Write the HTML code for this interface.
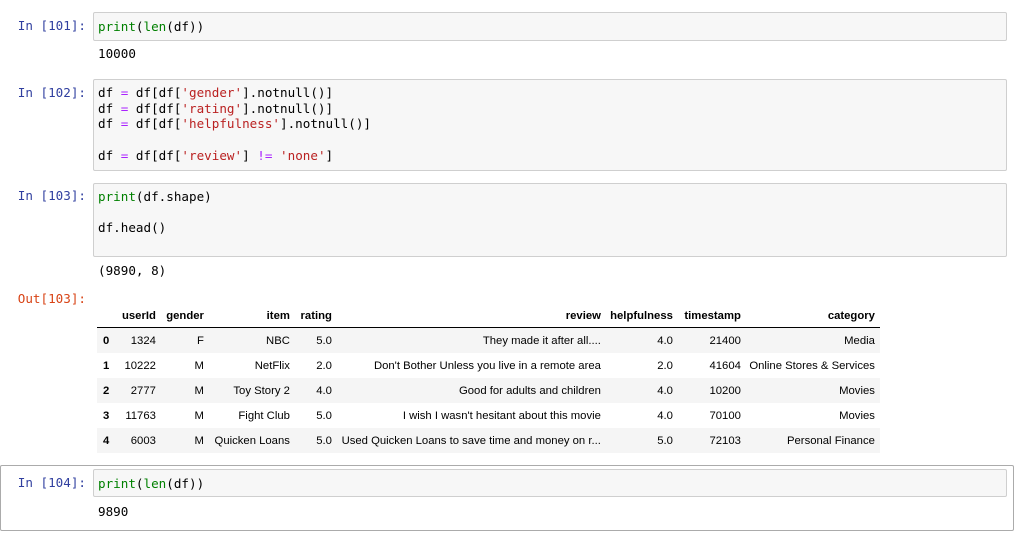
<!DOCTYPE html>
<html><head><meta charset="utf-8"><style>
body{margin:0;width:1024px;height:540px;background:#fff;position:relative;overflow:hidden;font-family:"DejaVu Sans Mono","Liberation Mono",monospace;font-size:12.6px;color:#000}
.p{position:absolute;right:calc(1024px - 86px);color:#303f9f;white-space:pre;line-height:16px}
.o{color:#d84315}
.box{position:absolute;left:93px;width:912px;background:#f7f7f7;border:1px solid #cfcfcf;border-radius:2px}
.code{position:absolute;left:98px;white-space:pre;line-height:15.7px}
.g{color:#008000}.s{color:#ba2121}.op{color:#aa22ff}
table{position:absolute;left:97px;top:304px;border-collapse:collapse;font-family:"Liberation Sans",Arial,sans-serif;font-size:11.3px}
th,td{text-align:right;padding:0 0 0 0;height:25px;white-space:nowrap}
thead th{height:23px;border-bottom:1px solid #000;font-weight:bold;vertical-align:middle}
tbody tr:nth-child(odd){background:#f5f5f5}
tbody th{text-align:left;padding-left:6px}
.sel{position:absolute;left:0;top:465px;width:1012px;height:64px;border:1px solid #ababab;border-radius:2px}
</style></head><body>
<div class="p" style="top:18px">In [101]:</div>
<div class="box" style="top:12px;height:27px"></div>
<div class="code" style="top:19px"><span class="g">print</span>(<span class="g">len</span>(df))</div>
<div class="code" style="top:46px">10000</div>

<div class="p" style="top:85px">In [102]:</div>
<div class="box" style="top:79px;height:90px"></div>
<div class="code" style="top:85px">df <span class="op">=</span> df[df[<span class="s">'gender'</span>].notnull()]
df <span class="op">=</span> df[df[<span class="s">'rating'</span>].notnull()]
df <span class="op">=</span> df[df[<span class="s">'helpfulness'</span>].notnull()]

df <span class="op">=</span> df[df[<span class="s">'review'</span>] <span class="op">!=</span> <span class="s">'none'</span>]</div>

<div class="p" style="top:188px">In [103]:</div>
<div class="box" style="top:183px;height:72px"></div>
<div class="code" style="top:189px"><span class="g">print</span>(df.shape)

df.head()</div>
<div class="code" style="top:263px">(9890, 8)</div>
<div class="p o" style="top:291px">Out[103]:</div>

<table>
<colgroup><col style="width:25px"><col style="width:33px"><col style="width:48px"><col style="width:86px"><col style="width:42px"><col style="width:269px"><col style="width:72px"><col style="width:68px"><col style="width:139px"></colgroup>
<thead><tr><th></th><th>userId</th><th>gender</th><th>item</th><th>rating</th><th>review</th><th>helpfulness</th><th>timestamp</th><th style="padding-right:5px">category</th></tr></thead>
<tbody>
<tr><th>0</th><td>1324</td><td>F</td><td>NBC</td><td>5.0</td><td>They made it after all....</td><td>4.0</td><td>21400</td><td style="padding-right:5px">Media</td></tr>
<tr><th>1</th><td>10222</td><td>M</td><td>NetFlix</td><td>2.0</td><td>Don't Bother Unless you live in a remote area</td><td>2.0</td><td>41604</td><td style="padding-right:5px">Online Stores &amp; Services</td></tr>
<tr><th>2</th><td>2777</td><td>M</td><td>Toy Story 2</td><td>4.0</td><td>Good for adults and children</td><td>4.0</td><td>10200</td><td style="padding-right:5px">Movies</td></tr>
<tr><th>3</th><td>11763</td><td>M</td><td>Fight Club</td><td>5.0</td><td>I wish I wasn't hesitant about this movie</td><td>4.0</td><td>70100</td><td style="padding-right:5px">Movies</td></tr>
<tr><th>4</th><td>6003</td><td>M</td><td>Quicken Loans</td><td>5.0</td><td>Used Quicken Loans to save time and money on r...</td><td>5.0</td><td>72103</td><td style="padding-right:5px">Personal Finance</td></tr>
</tbody></table>

<div class="sel"></div>
<div class="p" style="top:475px">In [104]:</div>
<div class="box" style="top:469px;height:26px"></div>
<div class="code" style="top:476px"><span class="g">print</span>(<span class="g">len</span>(df))</div>
<div class="code" style="top:504px">9890</div>
</body></html>
